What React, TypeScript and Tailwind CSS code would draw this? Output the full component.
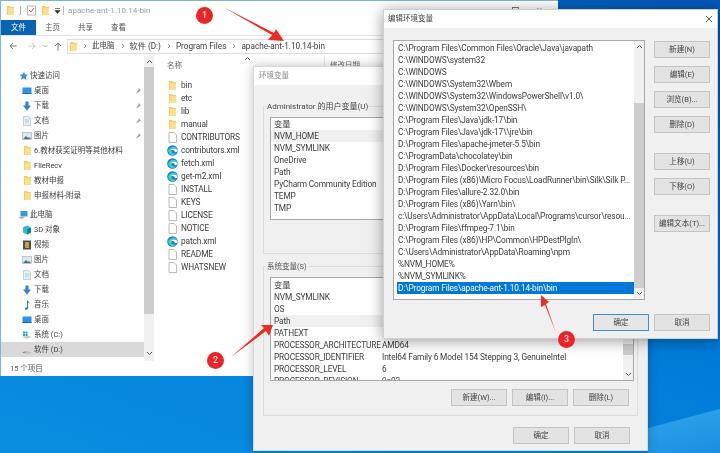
import React from "react";

const Folder = () => (
  <svg width="7" height="11" viewBox="0 0 7 11" className="shrink-0">
    <path d="M0 1h3l1 1h3v8H0z" fill="#f6cd62" />
    <path d="M1 3h6v7H1z" fill="#fbe08f" />
  </svg>
);
const Doc = () => (
  <svg width="9" height="11" viewBox="0 0 9 11" className="shrink-0">
    <path d="M1 .5h5l2.500 2.500v7.500H1z" fill="#fff" stroke="#a8a8a8" strokeWidth="0.8" />
  </svg>
);
const Edge = () => (
  <svg width="11" height="11" viewBox="0 0 11 11" className="shrink-0">
    <circle cx="5.500" cy="5.500" r="5.300" fill="#1b7fc4" />
    <path d="M1 6C2 2 8-.5 10.500 4.500 9 3.500 5 3 4.500 5.500 4 8 7 9.500 9.500 8.500 7.500 11 3 11 1 6z" fill="#3fd0c0" />
    <path d="M3.500 5.500c1-2 5-2.500 7-.5 .3 1.500-1 2.500-3 2.200 1-1.500-1-3-4-1.700z" fill="#ffffff" />
  </svg>
);
const Pin = () => (
  <svg width="7" height="7" viewBox="0 0 7 7" className="shrink-0">
    <path d="M3.500 1l2.500 2.500-1 .3-1 1L1 6.500l1.700-2.800 1-1z" fill="#9a9a9a" />
  </svg>
);
const Chevron = ({ up = false }: { up?: boolean }) => (
  <svg width="7" height="5" viewBox="0 0 7 5" className="shrink-0">
    <path d={up ? "M1 4l2.500-2.500L6 4" : "M1 1l2.500 2.500L6 1"} fill="none" stroke="#555" strokeWidth="1" />
  </svg>
);
const Crumb = () => (
  <svg width="4" height="6" viewBox="0 0 4 6" className="shrink-0">
    <path d="M1 1l2 2-2 2" fill="none" stroke="#777" strokeWidth="0.8" />
  </svg>
);

type IconKind = "star" | "desk" | "down" | "doc" | "pic" | "folder" | "pc" | "cube" | "video" | "music" | "sys" | "disk";
const SideIcon = ({ kind }: { kind: IconKind }) => {
  const s = { width: 10, height: 10, viewBox: "0 0 10 10", className: "shrink-0" };
  switch (kind) {
    case "star":
      return <svg {...s}><path d="M6 .5l1 3 3 .2-2.300 2 .8 3.300L5.800 7.300 3 9l.9-3.300L1.500 3.700l3.200-.2z" fill="#2f8fd8" /></svg>;
    case "desk":
      return <svg {...s}><rect x="0.500" y="1.500" width="9" height="6.500" fill="#2a96e6" /><rect x="0.500" y="7" width="9" height="1" fill="#0f6cb8" /></svg>;
    case "down":
      return <svg {...s}><path d="M3.500 .5h3v4h2.500L5 9.500 1 4.500h2.500z" fill="#2f80d0" /></svg>;
    case "doc":
      return <svg {...s}><path d="M1.500 .5h5l2 2v7h-7z" fill="#e8eef2" stroke="#a9b6bf" strokeWidth="0.6" /><path d="M3 4h4M3 6h4" stroke="#8fb0c8" strokeWidth="0.6" /></svg>;
    case "pic":
      return <svg {...s}><rect x="0.500" y="1.500" width="9" height="7" fill="#dfe8ee" stroke="#9aa8b2" strokeWidth="0.6" /><path d="M1 8l3-3 2 2 1-1 2 2z" fill="#47708c" /></svg>;
    case "pc":
      return <svg {...s}><rect x="2.500" y="1" width="7" height="5.500" fill="#3b9ad8" /><path d="M0 7.500l4-1 3 1-3 1.500z" fill="#aab4bb" /></svg>;
    case "cube":
      return <svg {...s}><path d="M5 .5l4 2v5l-4 2-4-2v-5z" fill="#34b5d0" /><path d="M5 4.500l4-2v5l-4 2z" fill="#127fa5" /></svg>;
    case "video":
      return <svg {...s}><rect x="1" y="0.500" width="8" height="9" fill="#4a4f57" /><rect x="3" y="2" width="4" height="6" fill="#d39a45" /></svg>;
    case "music":
      return <svg {...s}><path d="M5 .5l1 0c.2 1.500 1.500 2 2 3.200-.8-.7-1.500-1-2-1V8c0 1.200-1 1.800-2 1.800S2.500 9 3 8.200 4.300 7 5 7.200z" fill="#1f82d6" /></svg>;
    case "sys":
      return <svg {...s}><path d="M0 7l5-1.500L10 7 5 9z" fill="#c7ced3" /><rect x="1" y="1.500" width="2" height="2" fill="#1f9be0" /><rect x="3.500" y="1.500" width="2" height="2" fill="#1f9be0" /><rect x="1" y="4" width="2" height="2" fill="#1f9be0" /><rect x="3.500" y="4" width="2" height="2" fill="#1f9be0" /></svg>;
    case "disk":
      return <svg {...s}><path d="M0 7.500l5-1.500 5 1.500L5 9z" fill="#b5bcc2" /><path d="M1 7.500l2-.5" stroke="#555" strokeWidth="0.8" /></svg>;
    default:
      return <svg {...s} />;
  }
};

const quick: [IconKind, string, boolean][] = [
  ["desk", "桌面", true],
  ["down", "下载", true],
  ["doc", "文档", true],
  ["pic", "图片", true],
  ["folder", "6.教材获奖证明等其他材料", false],
  ["folder", "FileRecv", false],
  ["folder", "教材申报", false],
  ["folder", "申报材料-附录", false],
];
const pc: [IconKind, string][] = [
  ["cube", "3D 对象"],
  ["video", "视频"],
  ["pic", "图片"],
  ["doc", "文档"],
  ["down", "下载"],
  ["music", "音乐"],
  ["desk", "桌面"],
  ["sys", "系统 (C:)"],
  ["disk", "软件 (D:)"],
];
const files: ["f" | "d" | "e", string][] = [
  ["f", "bin"], ["f", "etc"], ["f", "lib"], ["f", "manual"],
  ["d", "CONTRIBUTORS"], ["e", "contributors.xml"], ["e", "fetch.xml"], ["e", "get-m2.xml"],
  ["d", "INSTALL"], ["d", "KEYS"], ["d", "LICENSE"], ["d", "NOTICE"],
  ["e", "patch.xml"], ["d", "README"], ["d", "WHATSNEW"],
];
const paths = [
  "C:\\Program Files\\Common Files\\Oracle\\Java\\javapath",
  "C:\\WINDOWS\\system32",
  "C:\\WINDOWS",
  "C:\\WINDOWS\\System32\\Wbem",
  "C:\\WINDOWS\\System32\\WindowsPowerShell\\v1.0\\",
  "C:\\WINDOWS\\System32\\OpenSSH\\",
  "C:\\Program Files\\Java\\jdk-17\\bin",
  "C:\\Program Files\\Java\\jdk-17\\\\jre\\bin",
  "D:\\Program Files\\apache-jmeter-5.5\\bin",
  "C:\\ProgramData\\chocolatey\\bin",
  "D:\\Program Files\\Docker\\resources\\bin",
  "D:\\Program Files (x86)\\Micro Focus\\LoadRunner\\bin\\Silk\\Silk P...",
  "D:\\Program Files\\allure-2.32.0\\bin",
  "D:\\Program Files (x86)\\Yarn\\bin\\",
  "c:\\Users\\Administrator\\AppData\\Local\\Programs\\cursor\\resou...",
  "D:\\Program Files\\ffmpeg-7.1\\bin",
  "C:\\Program Files (x86)\\HP\\Common\\HPDestPlgIn\\",
  "C:\\Users\\Administrator\\AppData\\Roaming\\npm",
  "%NVM_HOME%",
  "%NVM_SYMLINK%",
  "D:\\Program Files\\apache-ant-1.10.14-bin\\bin",
];

const Btn = ({ label, className = "", primary = false }: { label: string; className?: string; primary?: boolean }) => (
  <div
    className={`flex h-[17px] w-[56px] shrink-0 items-center justify-center whitespace-nowrap border text-[7.6px] text-[#444] ${
      primary ? "border-[#3f8fd0] bg-[#e6e6e6]" : "border-[#c4c4c4] bg-[#e3e3e3]"
    } ${className}`}
  >
    {label}
  </div>
);

const Scroll = ({ thumbTop, thumbH, gap }: { thumbTop: string; thumbH: string; gap: string }) => (
  <div className="flex h-full w-[10px] shrink-0 flex-col items-center bg-[#f0f0f0]">
    <div className="flex h-[11px] items-center"><Chevron up /></div>
    <div className={`${thumbTop} ${thumbH} w-full bg-[#cdcdcd]`} />
    <div className={`${gap} flex h-[11px] items-center`}><Chevron /></div>
  </div>
);

const VarRow = ({ name, value, on = false }: { name: string; value?: string; on?: boolean }) => (
  <div className={`flex h-[12px] items-center whitespace-nowrap pl-[3px] text-[8.3px] leading-none tracking-[-0.13px] text-[#3c3c3c] ${on ? "bg-[#f0f0f0]" : ""}`}>
    <span className="w-[108px] shrink-0">{name}</span>
    {value && <span>{value}</span>}
  </div>
);

const Arrow = ({ pts }: { pts: string }) => <polygon points={pts} fill="#ee2c24" />;
const Badge = ({ n, x, y }: { n: string; x: string; y: string }) => (
  <div className={`absolute ${x} ${y} flex h-[17px] w-[17px] items-center justify-center rounded-full bg-[#e8262a] text-[9px] text-white`}>{n}</div>
);

export default function App() {
  return (
    <div className="relative h-[453px] w-[720px] overflow-hidden bg-[linear-gradient(200deg,#0058b8_0%,#0078d7_45%,#0a8fe0_100%)] font-['Roboto','Noto_Sans_CJK_SC',sans-serif] blur-[0.3px]">
      {/* desktop light beam */}
      <div className="absolute bottom-0 right-0 h-[80px] w-[72px] bg-[linear-gradient(165deg,transparent_55%,#2a9ee8_56%,#1a8fe0_100%)]" />

      {/* Explorer */}
      <div className="absolute left-0 top-0 flex h-[376px] w-[558px] flex-col border-l border-t border-[#7cb6dc] bg-white">
        <div className="flex h-[19px] shrink-0 items-center text-[8.1px] text-[#a0a0a0]">
          <div className="ml-[6px]"><Folder /></div>
          <div className="ml-[6px] h-[9px] w-px bg-[#aaa]" />
          <svg width="9" height="11" viewBox="0 0 9 11" className="ml-[6px] shrink-0">
            <rect x="0.500" y="1" width="8" height="9" fill="#fff" stroke="#999" strokeWidth="0.7" />
            <path d="M2 5l2 2 3-4" fill="none" stroke="#d9533a" strokeWidth="1" />
          </svg>
          <div className="ml-[6px]"><Folder /></div>
          <svg width="7" height="6" viewBox="0 0 7 6" className="ml-[5px] shrink-0">
            <path d="M1 0.500h5M1 2.500h5l-2.500 3z" stroke="#444" strokeWidth="0.7" fill="#333" />
          </svg>
          <div className="ml-[2px] h-[9px] w-px bg-[#bbb]" />
          <span className="ml-[4px] whitespace-nowrap">apache-ant-1.10.14-bin</span>
          <div className="ml-auto mr-[16px] flex items-center gap-[18px] text-[#777]">
            <div className="h-[7px] w-[7px] border border-[#777]" />
            <span className="text-[10px] leading-none">×</span>
          </div>
        </div>
        <div className="flex h-[15px] shrink-0 items-center text-[7.5px] text-[#555]">
          <div className="flex h-[15px] w-[35px] items-center justify-center bg-[#0a63b0] text-white">文件</div>
          <span className="ml-[9px]">主页</span>
          <span className="ml-[18px]">共享</span>
          <span className="ml-[18px]">查看</span>
        </div>
        <div className="flex h-[21px] shrink-0 items-center border-t border-[#e3e3e3]">
          <svg width="8" height="8" viewBox="0 0 8 8" className="ml-[8px] shrink-0"><path d="M7.500 4H1M4 1L1 4l3 3" fill="none" stroke="#666" strokeWidth="0.9" /></svg>
          <svg width="8" height="8" viewBox="0 0 8 8" className="ml-[11px] shrink-0"><path d="M.5 4H7M4 1l3 3-3 3" fill="none" stroke="#c8c8c8" strokeWidth="0.9" /></svg>
          <svg width="5" height="4" viewBox="0 0 5 4" className="ml-[7px] shrink-0"><path d="M.5 1l2 2 2-2" fill="none" stroke="#888" strokeWidth="0.7" /></svg>
          <svg width="8" height="9" viewBox="0 0 8 9" className="ml-[6px] shrink-0"><path d="M4 8.500V1M1 4l3-3 3 3" fill="none" stroke="#666" strokeWidth="0.9" /></svg>
          <div className="ml-[5px] flex h-[15px] flex-1 items-center whitespace-nowrap border border-[#dedede] pl-[2px] text-[8.2px] text-[#3c3c3c]">
            <Folder />
            <span className="ml-[6px]"><Crumb /></span>
            <span className="ml-[5px] text-[7.5px]">此电脑</span>
            <span className="ml-[6px]"><Crumb /></span>
            <span className="ml-[5px]">软件 (D:)</span>
            <span className="ml-[6px]"><Crumb /></span>
            <span className="ml-[5px]">Program Files</span>
            <span className="ml-[6px]"><Crumb /></span>
            <span className="ml-[5px]">apache-ant-1.10.14-bin</span>
          </div>
        </div>
        <div className="flex min-h-0 flex-1">
          <div className="w-[143px] shrink-0 pt-[12px] text-[7.5px] text-[#3c3c3c]">
            <div className="flex h-[15px] items-center pl-[17px]">
              <SideIcon kind="star" /><span className="ml-[2px] whitespace-nowrap">快速访问</span>
            </div>
            {quick.map(([k, t, p]) => (
              <div key={t} className="flex h-[15px] items-center pl-[21px] pr-[2px]">
                {k === "folder" ? <span className="ml-[2px] mr-px"><Folder /></span> : <SideIcon kind={k} />}
                <span className="ml-[2px] whitespace-nowrap">{t}</span>
                {p && <span className="ml-auto"><Pin /></span>}
              </div>
            ))}
            <div className="mt-[4px] flex h-[15px] items-center pl-[17px]">
              <SideIcon kind="pc" /><span className="ml-[2px]">此电脑</span>
            </div>
            {pc.map(([k, t]) => (
              <div key={t} className={`flex h-[15px] items-center pl-[21px] ${t === "软件 (D:)" ? "bg-[#d9d9d9]" : ""}`}>
                <SideIcon kind={k} /><span className="ml-[2px] whitespace-nowrap">{t}</span>
              </div>
            ))}
          </div>
          <Scroll thumbTop="mt-0" thumbH="h-[247px]" gap="mt-[34px]" />
          <div className="min-w-0 flex-1">
            <div className="relative flex h-[20px] items-center pl-[13px] text-[7.5px] text-[#666]">
              名称
              <span className="absolute left-[90px] top-0"><Chevron up /></span>
              <span className="absolute left-[170px] top-0 h-[20px] w-px bg-[#e3e3e3]" />
              <span className="absolute left-[176px]">修改日期</span>
            </div>
            <div className="pt-[3px]">
              {files.map(([k, t]) => (
                <div key={t} className="flex h-[13px] items-center text-[8.3px] tracking-[-0.13px] text-[#3c3c3c]">
                  <div className="flex w-[27px] justify-center pl-[9px]">
                    {k === "f" ? <Folder /> : k === "d" ? <Doc /> : <Edge />}
                  </div>
                  <span className="whitespace-nowrap">{t}</span>
                </div>
              ))}
            </div>
          </div>
        </div>
        <div className="flex h-[15px] shrink-0 items-center pl-[9px] text-[7.5px] text-[#555]">15 个项目</div>
      </div>

      {/* Environment variables */}
      <div className="absolute left-[253px] top-[66px] flex h-[385px] w-[395px] flex-col border border-[#d8d8d8] bg-[#f0f0f0] shadow-[0_0_10px_rgba(0,0,0,0.25)]">
        <div className="flex h-[18px] shrink-0 items-center bg-white pl-[5px] text-[7.5px] text-[#8a8a8a]">环境变量</div>
        <div className="relative mx-[9px] mt-[21px] h-[148px] border border-[#dcdcdc]">
          <span className="absolute -top-[6px] left-[2px] whitespace-nowrap bg-[#f0f0f0] px-px text-[8px] leading-[12px] text-[#444]">Administrator 的用户变量(U)</span>
          <div className="ml-[6px] mt-[10px] h-[103px] w-[362px] border border-[#a8a8a8] bg-white">
            <VarRow name="变量" />
            <VarRow name="NVM_HOME" on />
            <VarRow name="NVM_SYMLINK" />
            <VarRow name="OneDrive" />
            <VarRow name="Path" />
            <VarRow name="PyCharm Community Edition" />
            <VarRow name="TEMP" />
            <VarRow name="TMP" />
          </div>
        </div>
        <div className="relative mx-[9px] mt-[12px] h-[150px] border border-[#dcdcdc]">
          <span className="absolute -top-[6px] left-[2px] whitespace-nowrap bg-[#f0f0f0] px-px text-[7.5px] leading-[12px] text-[#555]">系统变量(S)</span>
          <div className="ml-[6px] mt-[10px] flex h-[104px] w-[364px] overflow-hidden border border-[#a8a8a8] bg-white">
            <div className="min-w-0 flex-1 pt-px">
              <VarRow name="变量" />
              <VarRow name="NVM_SYMLINK" />
              <VarRow name="OS" />
              <VarRow name="Path" on />
              <VarRow name="PATHEXT" />
              <VarRow name="PROCESSOR_ARCHITECTURE" value="AMD64" />
              <VarRow name="PROCESSOR_IDENTIFIER" value="Intel64 Family 6 Model 154 Stepping 3, GenuineIntel" />
              <VarRow name="PROCESSOR_LEVEL" value="6" />
              <VarRow name="PROCESSOR_REVISION" value="9a03" />
            </div>
            <Scroll thumbTop="mt-[55px]" thumbH="h-[11px]" gap="mt-[14px]" />
          </div>
          <div className="mr-[8px] mt-[8px] flex justify-end gap-[5px]">
            <Btn label="新建(W)..." />
            <Btn label="编辑(I)..." />
            <Btn label="删除(L)" />
          </div>
        </div>
        <div className="mr-[17px] mt-[11px] flex justify-end gap-[5px]">
          <Btn label="确定" />
          <Btn label="取消" />
        </div>
      </div>

      {/* Edit variables */}
      <div className="absolute left-[383px] top-[9px] flex h-[330px] w-[335px] flex-col border border-[#d0d0d0] bg-[#f0f0f0] shadow-[0_2px_14px_rgba(0,0,0,0.4)]">
        <div className="flex h-[18px] shrink-0 items-center justify-between bg-white px-[4px] text-[7.5px] text-[#444]">
          <span>编辑环境变量</span>
          <svg width="8" height="8" viewBox="0 0 8 8"><path d="M1 1l6 6M7 1l-6 6" stroke="#444" strokeWidth="0.9" /></svg>
        </div>
        <div className="ml-[9px] mt-[12px] flex">
          <div className="flex h-[260px] w-[252px] border border-[#a8a8a8] bg-white pl-[3px]">
            <div className="min-w-0 flex-1 pt-px">
              {paths.map((p, i) => (
                <div
                  key={p}
                  className={`flex h-[12px] items-center whitespace-nowrap pl-[1px] text-[8.3px] leading-none tracking-[-0.13px] ${
                    i === paths.length - 1 ? "bg-[#0078d7] text-white" : "text-[#3c3c3c]"
                  }`}
                >
                  {p}
                </div>
              ))}
            </div>
            <Scroll thumbTop="mt-[51px]" thumbH="h-[185px]" gap="mt-0" />
          </div>
          <div className="ml-[9px] flex flex-col">
            <Btn label="新建(N)" className="mt-px" />
            <Btn label="编辑(E)" className="mt-[8px]" />
            <Btn label="浏览(B)..." className="mt-[8px]" />
            <Btn label="删除(D)" className="mt-[8px]" />
            <Btn label="上移(U)" className="mt-[20px]" />
            <Btn label="下移(O)" className="mt-[8px]" />
            <Btn label="编辑文本(T)..." className="mt-[20px]" />
          </div>
        </div>
        <div className="mr-[7px] mt-[14px] flex justify-end gap-[5px]">
          <Btn label="确定" primary />
          <Btn label="取消" />
        </div>
      </div>

      {/* Annotations */}
      <svg width="720" height="453" viewBox="0 0 720 453" className="pointer-events-none absolute left-0 top-0">
        <Arrow pts="223,7 274,33 276,29 284,41 268,40 272,35" />
        <Arrow pts="231,357 264,328 261,325 273,325 269,336 266,331" />
        <Arrow pts="556,333 545,305 541,307 541,295 549,302 546,304" />
      </svg>
      <Badge n="1" x="left-[196px]" y="top-[7px]" />
      <Badge n="2" x="left-[207px]" y="top-[352px]" />
      <Badge n="3" x="left-[558px]" y="top-[331px]" />
    </div>
  );
}
